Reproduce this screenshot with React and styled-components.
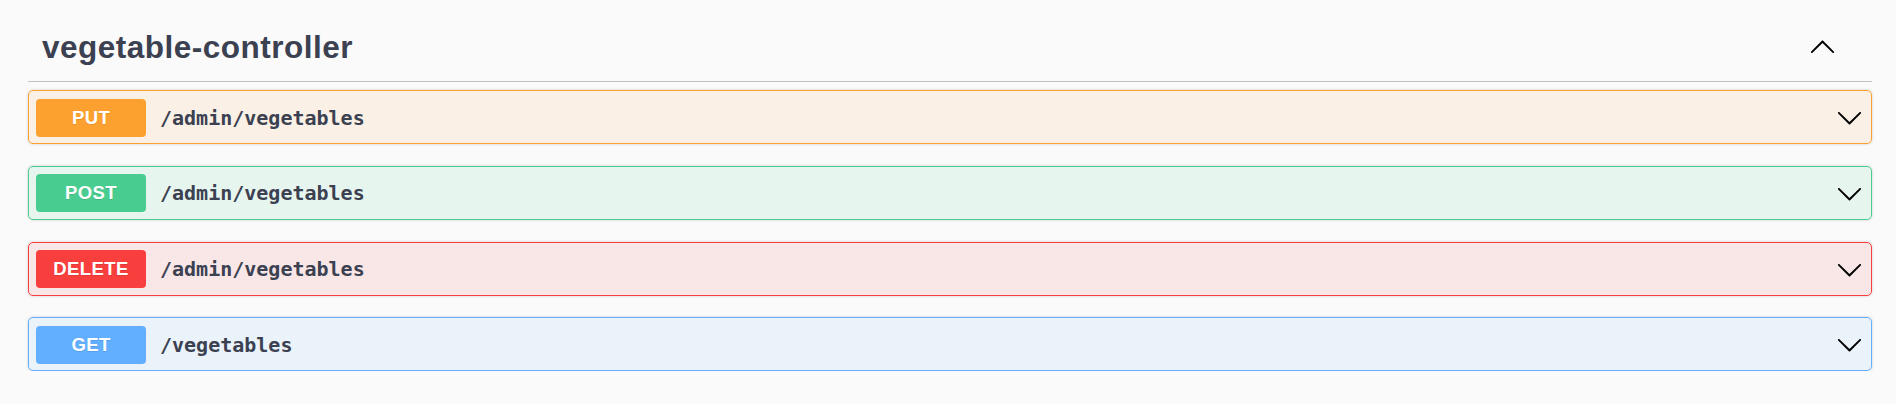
import React from "react";
import styled, { createGlobalStyle } from "styled-components";

const GlobalStyle = createGlobalStyle`
  html, body {
    margin: 0;
    padding: 0;
    background: #fafafa;
  }
`;

const methodColors = {
  put: "#fca130",
  post: "#49cc90",
  delete: "#f93e3e",
  get: "#61affe",
};

const Page = styled.div`
  padding: 0 24px 0 28px;
  font-family: "Liberation Sans", Arial, sans-serif;
  color: #3b4151;
`;

const TagHeader = styled.div`
  display: flex;
  align-items: center;
  justify-content: space-between;
  box-sizing: border-box;
  height: 82px;
  padding: 13px 36px 0 14px;
  border-bottom: 1px solid rgba(59, 65, 81, 0.3);
  margin-bottom: 8px;
`;

const TagTitle = styled.h3`
  margin: 0;
  font-size: 31.5px;
  font-weight: 700;
  letter-spacing: 0.5px;
  color: #3b4151;
`;

const Operations = styled.div`
  display: flex;
  flex-direction: column;
  gap: 21.75px;
`;

const OpBlock = styled.div`
  box-sizing: border-box;
  height: 54px;
  display: flex;
  align-items: center;
  padding: 1px 8px 0 7px;
  border: 1px solid ${(p) => p.$color};
  border-radius: 5px;
  background: ${(p) => p.$color}1a;
  box-shadow: 0 0 3px rgba(0, 0, 0, 0.19);
`;

const MethodBadge = styled.span`
  flex: none;
  width: 110px;
  height: 38px;
  display: flex;
  align-items: center;
  justify-content: center;
  border-radius: 4px;
  background: ${(p) => p.$color};
  color: #fff;
  font-size: 18.5px;
  font-weight: 700;
  letter-spacing: 0.4px;
  text-shadow: 0 1px 0 rgba(0, 0, 0, 0.1);
`;

const PathText = styled.span`
  flex: 1;
  margin-left: 14px;
  font-family: "DejaVu Sans Mono", "Liberation Mono", monospace;
  font-size: 20px;
  font-weight: 700;
  color: #3b4151;
`;

const Arrow = ({ up }) => (
  <svg
    width="27"
    height="27"
    viewBox="0 0 20 20"
    style={up ? { transform: "rotate(180deg)" } : undefined}
  >
    <path
      fill="#000"
      d="M17.418 6.109c.272-.268.709-.268.979 0s.271.701 0 .969l-7.908 7.83c-.27.268-.707.268-.979 0l-7.908-7.83c-.27-.268-.27-.701 0-.969.271-.268.709-.268.979 0L10 13.25l7.418-7.141z"
    />
  </svg>
);

const ops = [
  { method: "put", path: "/admin/vegetables" },
  { method: "post", path: "/admin/vegetables" },
  { method: "delete", path: "/admin/vegetables" },
  { method: "get", path: "/vegetables" },
];

export default function App() {
  return (
    <>
      <GlobalStyle />
      <Page>
        <TagHeader>
          <TagTitle>vegetable-controller</TagTitle>
          <Arrow up />
        </TagHeader>
        <Operations>
          {ops.map((op) => (
            <OpBlock key={op.method} $color={methodColors[op.method]}>
              <MethodBadge $color={methodColors[op.method]}>
                {op.method.toUpperCase()}
              </MethodBadge>
              <PathText>{op.path}</PathText>
              <Arrow />
            </OpBlock>
          ))}
        </Operations>
      </Page>
    </>
  );
}
